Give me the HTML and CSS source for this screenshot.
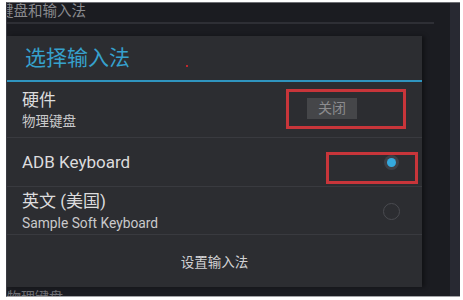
FILE: index.html
```html
<!DOCTYPE html>
<html lang="zh">
<head>
<meta charset="utf-8">
<title>选择输入法</title>
<link rel="stylesheet" href="styles.css">
</head>
<body>
<div class="screen">
  <div class="content">
    <div class="bg-title">键盘和输入法</div>
    <div class="bg-rule"></div>
    <div class="dialog">
      <div class="dlg-title">选择输入法</div>
      <div class="dlg-rule"></div>
      <div class="row row-hw">
        <div class="texts">
          <div class="t-main">硬件</div>
          <div class="t-sub">物理键盘</div>
        </div>
        <div class="toggle">关闭</div>
      </div>
      <div class="row row-adb">
        <div class="t-main">ADB Keyboard</div>
        <span class="radio on"></span>
      </div>
      <div class="row row-en">
        <div class="texts">
          <div class="t-main">英文 (美国)</div>
          <div class="t-sub">Sample Soft Keyboard</div>
        </div>
        <span class="radio off"></span>
      </div>
      <div class="dlg-button">设置输入法</div>
    </div>
    <div class="bg-bottom">物理键盘</div>
  </div>
  <div class="strip"></div>
</div>
<div class="mark mark-1"></div>
<div class="mark mark-2"></div>
<div class="dot"></div>
</body>
</html>
```
FILE: styles.css
```css
html, body {
  margin: 0;
  padding: 0;
  background: #ffffff;
}
body {
  width: 463px;
  height: 300px;
  position: relative;
  overflow: hidden;
  font-family: Roboto, "Noto Sans CJK SC", sans-serif;
}
.screen {
  margin: 2px 0 0 6px;
  width: 453px;
  height: 293px;
  display: flex;
  background: #1b1c21;
  border-top: 1px solid #6e6f74;
  border-bottom: 1px solid #a3a3a6;
  border-left: 1px solid #3a3b42;
  overflow: hidden;
}
.content {
  width: 443px;
  display: flex;
  flex-direction: column;
}
.content > * {
  flex: none;
}
.strip {
  width: 10px;
  background: #282932;
}
.bg-title {
  height: 19px;
  line-height: 17px;
  font-size: 14.5px;
  color: #8a8b8f;
  margin-left: -8px;
  white-space: nowrap;
}
.bg-rule {
  height: 2px;
  width: 427px;
  background: #2e2f35;
  margin-bottom: 12px;
}
.dialog {
  width: 415px;
  height: 251px;
  background: #2c2d31;
  display: flex;
  flex-direction: column;
  box-shadow: 3px 0 4px rgba(0,0,0,0.35);
}
.dlg-title {
  height: 44px;
  line-height: 44px;
  padding-left: 18px;
  font-size: 21px;
  color: #36a1cd;
}
.dlg-rule {
  height: 2px;
  background: #2f94bf;
}
.row {
  display: flex;
  align-items: center;
  justify-content: space-between;
  padding-left: 15px;
  border-bottom: 1px solid #393a3f;
}
.row-hw {
  height: 55px;
  align-items: flex-start;
}
.row-hw .texts {
  padding-top: 7px;
}
.row-hw .t-main {
  line-height: 22px;
}
.row-hw .t-sub {
  margin-top: 1px;
}
.row-adb {
  height: 48px;
}
.row-en {
  height: 47px;
}
.row-en .texts {
  padding-top: 2px;
}
.row-en .t-main {
  line-height: 20px;
}
.row-en .t-sub {
  margin-top: 3px;
  font-size: 13.8px;
}
.t-main {
  font-size: 17px;
  color: #dcdcdd;
  line-height: 20px;
}
.t-sub {
  font-size: 13.5px;
  color: #c9c9cb;
  line-height: 18px;
}
.toggle {
  margin-top: 16px;
  margin-right: 65px;
  width: 50px;
  height: 21px;
  line-height: 21px;
  text-align: center;
  background: #454649;
  color: #8c8c8f;
  font-size: 14px;
}
.radio {
  flex: none;
  border-radius: 50%;
}
.radio.on {
  width: 9px;
  height: 9px;
  margin-right: 26px;
  background: #35a9de;
  box-shadow: 0 0 0 3px #3e4047;
}
.radio.off {
  width: 15px;
  height: 15px;
  margin-right: 22px;
  margin-top: 2px;
  border: 1px solid #4a4b50;
}
.dlg-button {
  flex: 1;
  display: flex;
  align-items: center;
  justify-content: center;
  font-size: 13.5px;
  color: #d2d2d4;
}
.bg-bottom {
  margin-top: 2px;
  font-size: 14px;
  line-height: 16px;
  color: #6f7075;
  white-space: nowrap;
}
.mark {
  position: absolute;
  border: 3px solid #c8353a;
  box-sizing: border-box;
}
.mark-1 {
  left: 286px;
  top: 89px;
  width: 120px;
  height: 40px;
}
.mark-2 {
  left: 326px;
  top: 152px;
  width: 92px;
  height: 32px;
}
.dot {
  position: absolute;
  left: 186px;
  top: 65px;
  width: 2px;
  height: 2px;
  background: #c0282d;
}
```
